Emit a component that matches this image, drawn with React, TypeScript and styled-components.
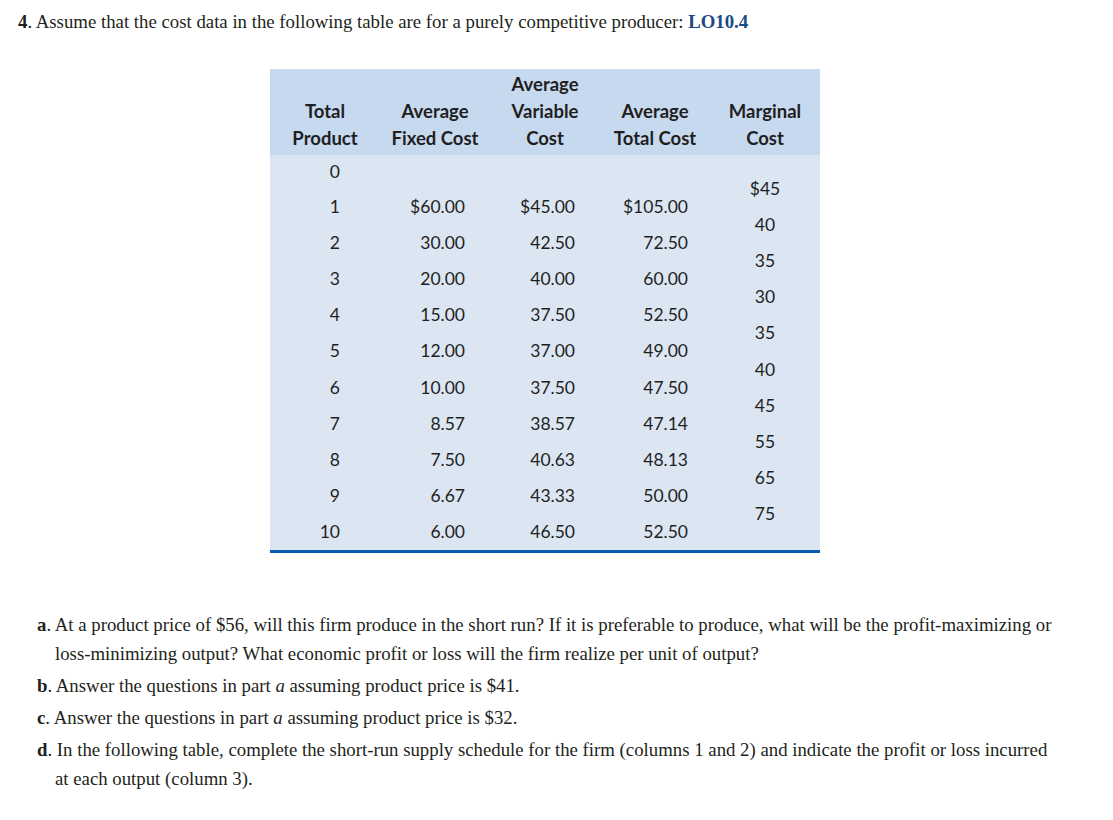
import React from 'react'
import styled, { createGlobalStyle } from 'styled-components'

const GlobalStyle = createGlobalStyle`
  html, body {
    margin: 0;
    padding: 0;
    background: #ffffff;
  }
  body {
    font-family: "Liberation Serif", "Times New Roman", serif;
    color: #231f20;
  }
`

const Page = styled.div`
  width: 1113px;
  height: 820px;
  overflow: hidden;
  padding-top: 11px;
  box-sizing: border-box;
`

const Title = styled.div`
  margin-left: 18px;
  font-size: 18.8px;
  line-height: 22px;
`

const Num = styled.b`
  font-weight: 700;
`

const Lo = styled.b`
  color: #1a4a85;
  font-weight: 700;
`

const TableWrap = styled.div`
  margin: 36px 0 0 270px;
  width: 550px;
  font-family: Lato, "Open Sans", sans-serif;
  font-size: 17.5px;
  color: #1f1f1f;
`

const Head = styled.div`
  display: grid;
  grid-template-columns: repeat(5, 110px);
  background: #c7d9ef;
  padding: 2px 0 3px;
`

const HeadCell = styled.div`
  display: flex;
  flex-direction: column;
  justify-content: flex-end;
  align-items: center;
  font-size: 18.5px;
  font-weight: 700;
  line-height: 27px;
  text-align: center;
  white-space: nowrap;
`

const Body = styled.div`
  display: grid;
  grid-template-columns: repeat(5, 110px);
  grid-template-rows: 15px repeat(21, 18.1px);
  background: #dbe6f2;
  border-bottom: 3px solid #0b5cad;
`

const Cell = styled.div<{ $row: number; $col: number; $pad: number; $center?: boolean }>`
  grid-column: ${({ $col }) => $col};
  grid-row: ${({ $row }) => `${$row} / span 2`};
  display: flex;
  align-items: center;
  justify-content: ${({ $center }) => ($center ? 'center' : 'flex-end')};
  padding-right: ${({ $pad }) => $pad}px;
  white-space: nowrap;
`

const Questions = styled.div`
  margin-top: 57px;
  font-size: 18.8px;
  line-height: 29px;
`

const Item = styled.p`
  margin: 0 0 3px 0;
  padding-left: 55px;
  padding-right: 58px;
  text-indent: -18px;
`

const Letter = styled.b`
  font-weight: 700;
`

const rows: [string, string, string, string][] = [
  ['0', '', '', ''],
  ['1', '$60.00', '$45.00', '$105.00'],
  ['2', '30.00', '42.50', '72.50'],
  ['3', '20.00', '40.00', '60.00'],
  ['4', '15.00', '37.50', '52.50'],
  ['5', '12.00', '37.00', '49.00'],
  ['6', '10.00', '37.50', '47.50'],
  ['7', '8.57', '38.57', '47.14'],
  ['8', '7.50', '40.63', '48.13'],
  ['9', '6.67', '43.33', '50.00'],
  ['10', '6.00', '46.50', '52.50'],
]

const marginal = ['$45', '40', '35', '30', '35', '40', '45', '55', '65', '75']

const pads = [40, 25, 25, 22]

const headers = [
  ['Total', 'Product'],
  ['Average', 'Fixed Cost'],
  ['Average', 'Variable', 'Cost'],
  ['Average', 'Total Cost'],
  ['Marginal', 'Cost'],
]

export default function App() {
  return (
    <Page>
      <GlobalStyle />
      <Title>
        <Num>4</Num>. Assume that the cost data in the following table are for a purely competitive producer:{' '}
        <Lo>LO10.4</Lo>
      </Title>

      <TableWrap>
        <Head>
          {headers.map((lines, i) => (
            <HeadCell key={i}>
              {lines.map((l) => (
                <span key={l}>{l}</span>
              ))}
            </HeadCell>
          ))}
        </Head>
        <Body>
          {rows.map((r, k) =>
            r.map((v, c) =>
              v ? (
                <Cell key={`${k}-${c}`} $row={2 * k + 1} $col={c + 1} $pad={pads[c]}>
                  {v}
                </Cell>
              ) : null
            )
          )}
          {marginal.map((v, k) => (
            <Cell key={`mc-${k}`} $row={2 * k + 2} $col={5} $pad={0} $center>
              {v}
            </Cell>
          ))}
        </Body>
      </TableWrap>

      <Questions>
        <Item>
          <Letter>a</Letter>. At a product price of $56, will this firm produce in the short run? If it is preferable to produce, what
          will be the profit-maximizing or loss-minimizing output? What economic profit or loss will the firm realize per unit of
          output?
        </Item>
        <Item>
          <Letter>b</Letter>. Answer the questions in part <i>a</i> assuming product price is $41.
        </Item>
        <Item>
          <Letter>c</Letter>. Answer the questions in part <i>a</i> assuming product price is $32.
        </Item>
        <Item>
          <Letter>d</Letter>. In the following table, complete the short-run supply schedule for the firm (columns 1 and 2) and
          indicate the profit or loss incurred at each output (column 3).
        </Item>
      </Questions>
    </Page>
  )
}
